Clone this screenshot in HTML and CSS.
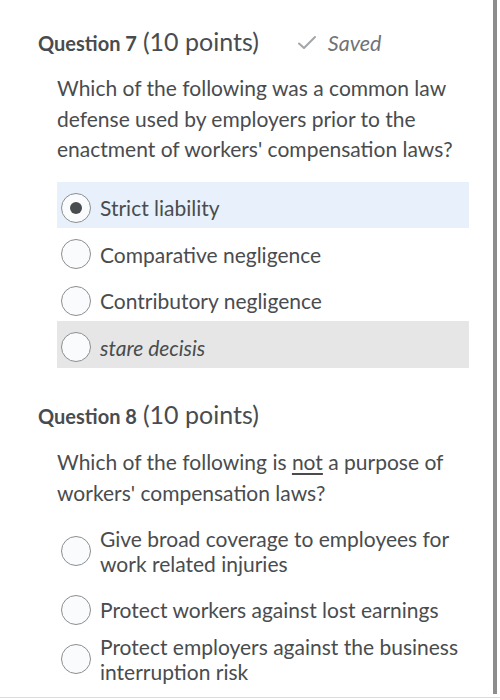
FILE: index.html
```html
<!DOCTYPE html>
<html>
<head>
<meta charset="utf-8">
<link rel="stylesheet" href="styles.css">
</head>
<body>
<div class="frame">
  <section class="question q7">
    <div class="q-head">
      <span class="q-title">Question 7</span>
      <span class="q-points">(10 points)</span>
      <span class="saved">
        <svg class="check" width="20" height="16" viewBox="0 0 20 16"><path d="M2 8.5 L7 13 L18 2" fill="none" stroke="#a3a6a9" stroke-width="2" stroke-linecap="round" stroke-linejoin="round"/></svg>
        <span class="saved-text">Saved</span>
      </span>
    </div>
    <p class="q-text">Which of the following was a common law defense used by employers prior to the enactment of workers' compensation laws?</p>
    <div class="options">
      <div class="opt selected"><span class="radio checked"></span><span class="opt-text">Strict liability</span></div>
      <div class="opt"><span class="radio"></span><span class="opt-text">Comparative negligence</span></div>
      <div class="opt"><span class="radio"></span><span class="opt-text">Contributory negligence</span></div>
      <div class="opt hover"><span class="radio"></span><span class="opt-text italic">stare decisis</span></div>
    </div>
  </section>
  <section class="question q8">
    <div class="q-head">
      <span class="q-title">Question 8</span>
      <span class="q-points">(10 points)</span>
    </div>
    <p class="q-text">Which of the following is <span class="ul">not</span> a purpose of workers' compensation laws?</p>
    <div class="options multi">
      <div class="opt"><span class="radio"></span><span class="opt-text">Give broad coverage to employees for work related injuries</span></div>
      <div class="opt"><span class="radio"></span><span class="opt-text">Protect workers against lost earnings</span></div>
      <div class="opt"><span class="radio"></span><span class="opt-text">Protect employers against the business interruption risk</span></div>
    </div>
  </section>
</div>
<div class="bottom-line"></div>
</body>
</html>
```

FILE: styles.css
```css
html, body {
  margin: 0;
  padding: 0;
  background: #ffffff;
}
body {
  font-family: Lato, "Open Sans", sans-serif;
  color: #494c4e;
  width: 500px;
  height: 700px;
  overflow: hidden;
}
.frame {
  width: 493px;
  height: 694px;
  border-right: 4px solid #8d8d8d;
  box-sizing: content-box;
}
.bottom-line {
  margin-top: 3px;
  height: 1px;
  background: #dcdcdc;
}
.question {
  padding-left: 38px;
}
.q7 {
  padding-top: 26px;
}
.q8 {
  padding-top: 31px;
}
.q-head {
  display: flex;
  align-items: baseline;
  height: 30px;
  line-height: 30px;
}
.q-title {
  font-weight: 700;
  font-size: 20px;
}
.q-points {
  font-size: 25px;
  margin-left: 6px;
}
.saved {
  display: flex;
  align-items: baseline;
  margin-left: 38px;
}
.check {
  align-self: center;
  margin-right: 11px;
}
.saved-text {
  font-style: italic;
  font-size: 21.5px;
  color: #6e7376;
}
.q-text {
  margin: 17px 0 0 19px;
  font-size: 21px;
  line-height: 30.5px;
  width: 420px;
}
.q8 .q-text {
  margin-top: 17px;
  line-height: 31px;
}
.ul {
  text-decoration: underline;
  text-underline-offset: 3px;
}
.options {
  margin: 17px 0 0 19px;
  width: 412px;
}
.opt {
  display: flex;
  align-items: center;
  padding: 11px 4px 5.5px;
  font-size: 21px;
}
.opt.selected {
  background: #e8f0fb;
}
.opt.hover {
  background: #e6e6e6;
}
.radio {
  flex: none;
  width: 30px;
  height: 30px;
  box-sizing: border-box;
  border: 1.5px solid #8b8e91;
  border-radius: 50%;
  background: #fafbfc;
  display: flex;
  align-items: center;
  justify-content: center;
  margin-right: 9px;
}
.radio.checked::after {
  content: "";
  width: 12px;
  height: 12px;
  border-radius: 50%;
  background: #494c4e;
}
.opt-text {
  line-height: 25px;
}
.italic {
  font-style: italic;
}
.options.multi {
  margin-top: 16px;
  display: flex;
  flex-direction: column;
  gap: 5px;
}
.options.multi .opt {
  padding: 2px 4px;
}
.options.multi .opt:first-child {
  margin-bottom: 10px;
}
```
